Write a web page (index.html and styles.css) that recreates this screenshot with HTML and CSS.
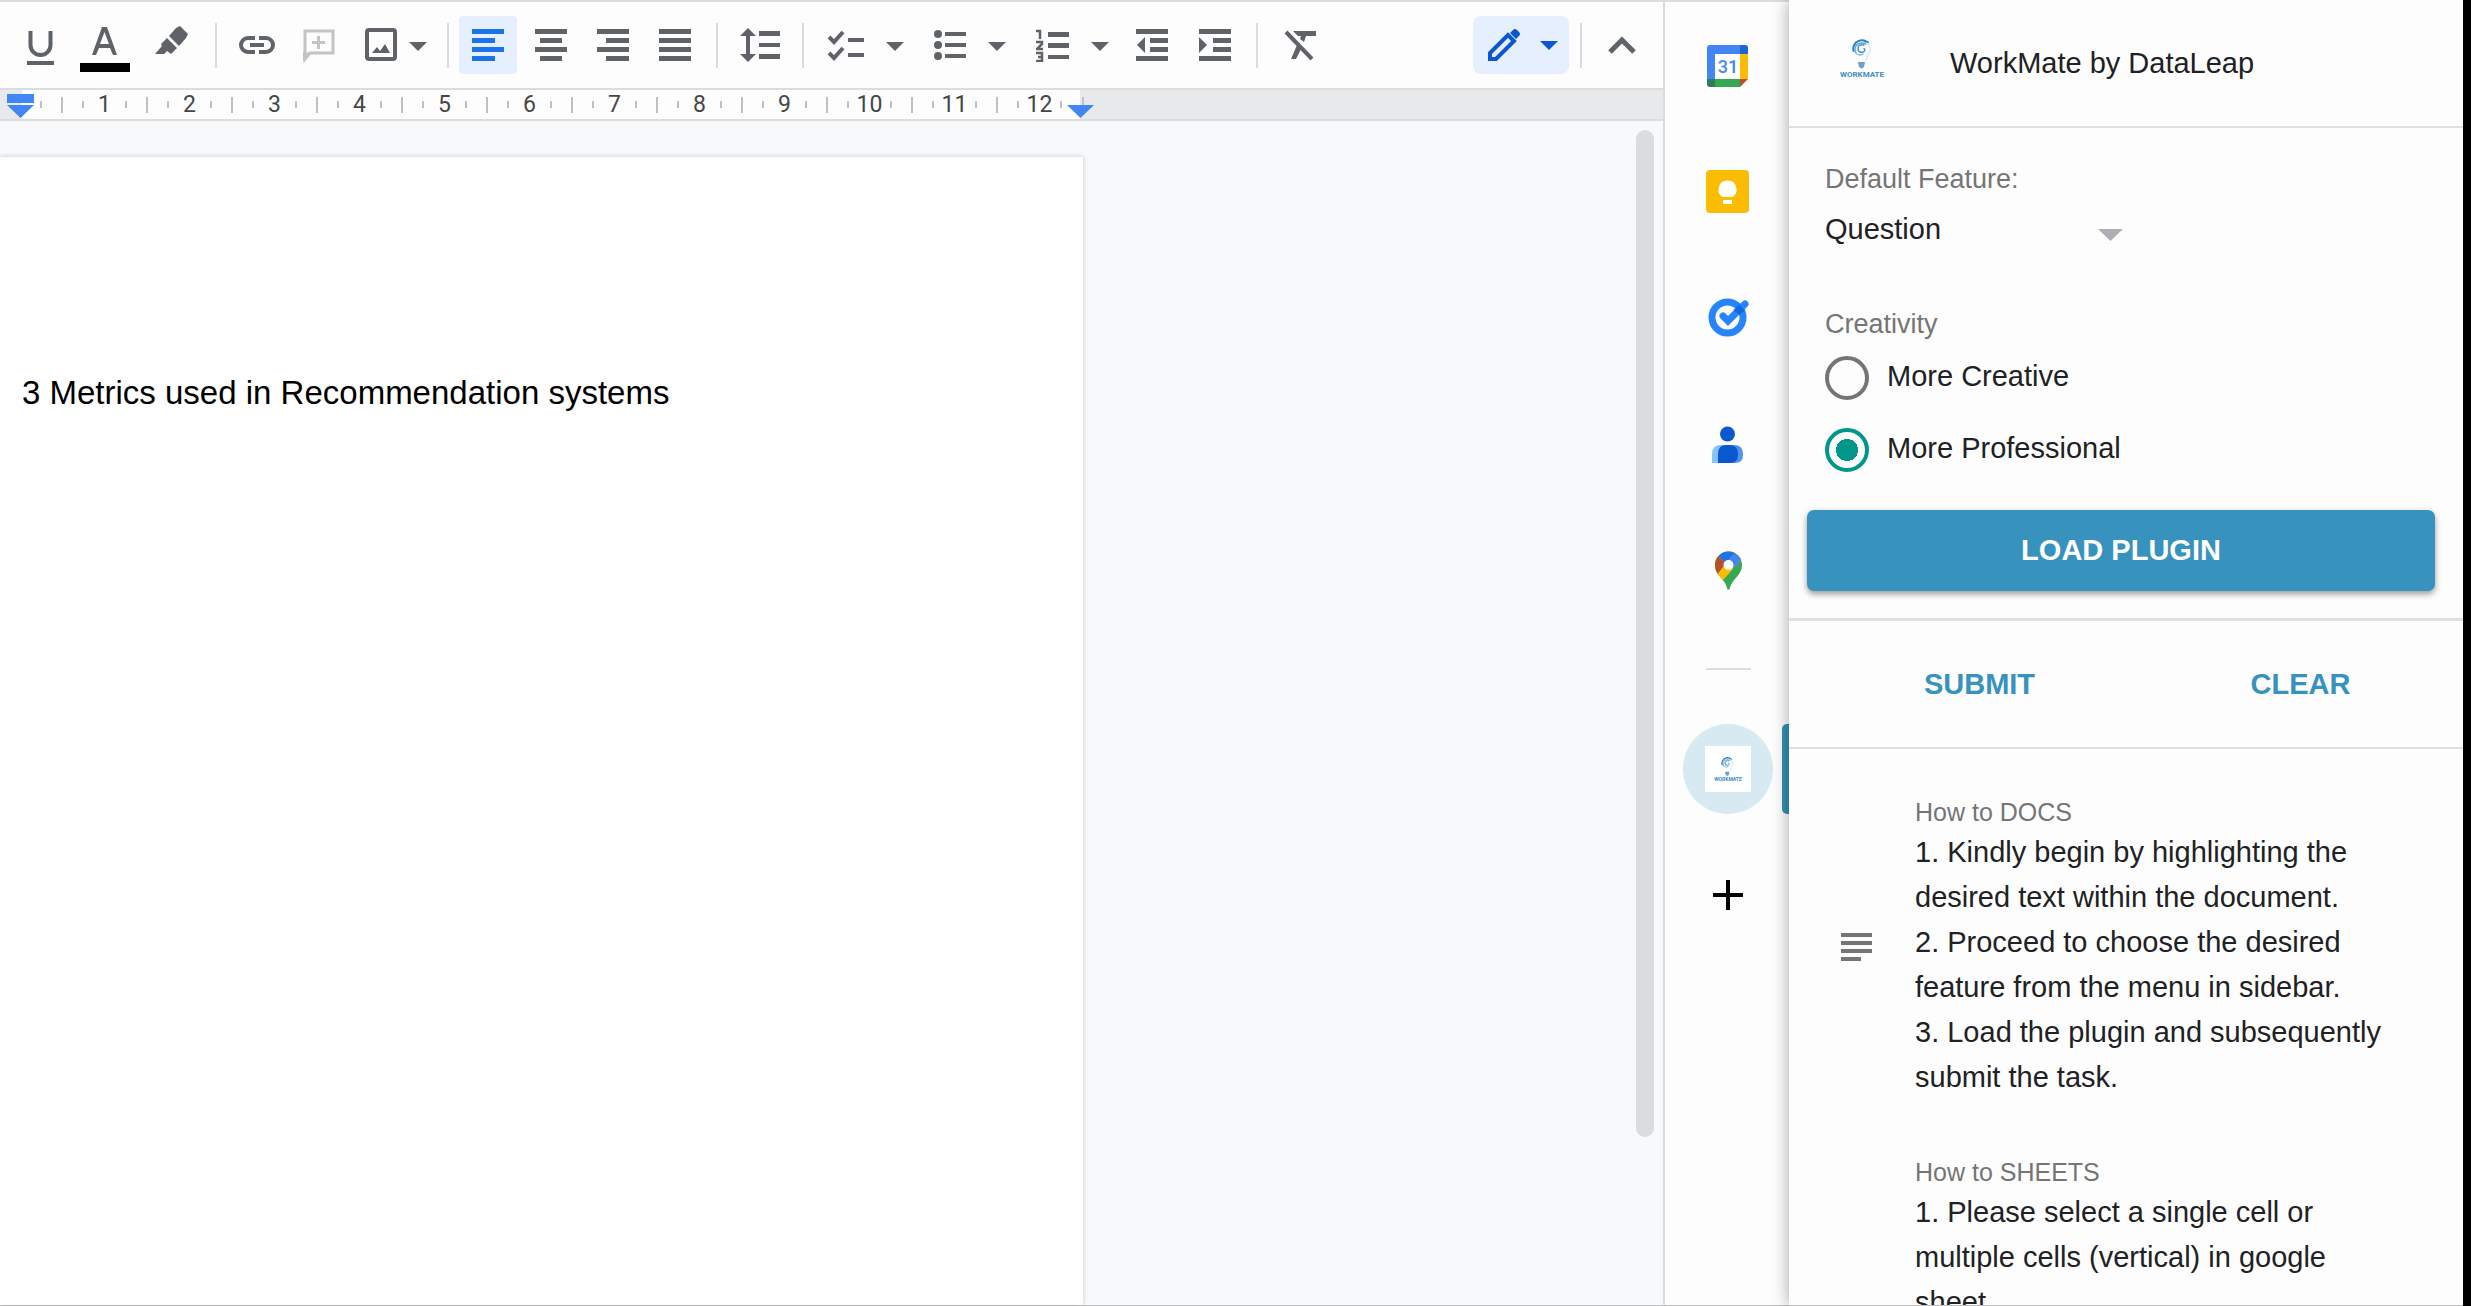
FILE: index.html
```html
<!DOCTYPE html>
<html lang="en">
<head>
<meta charset="utf-8">
<title>WorkMate by DataLeap</title>
<link rel="stylesheet" href="styles.css">
</head>
<body>
<div class="app">
  <main class="editor">
    <div class="toolbar" role="toolbar" aria-label="Formatting">
      <button class="tool" aria-label="Underline"><svg width="40" height="58" viewBox="0 0 40 58"><path d="M10.500 15v14a10 10 0 0 0 20 0V15" fill="none" stroke="#5f6368" stroke-width="4"/><path d="M7 45h27v4H7z"/></svg></button>
      <button class="tool wide" aria-label="Text color"><svg width="50" height="58" viewBox="0 0 50 58"><path d="M22 11h5l10 28h-4l-3-7H19l-3 7h-4zM20 28h9l-4.500-12z"/><path d="M0 47h50v9H0z" fill="#000"/></svg></button>
      <button class="tool" aria-label="Highlight color"><svg width="40" height="58" viewBox="0 0 40 58"><path d="M27 10l8 8-2 4-7 8-10-10 7-8zM14 22l10 10-6 6-4-3-3 3H2l7-8-1-2z"/></svg></button>
      <span class="divider"></span>
      <button class="tool" aria-label="Insert link"><svg width="40" height="58" viewBox="2 0 40 58"><path d="M18 22h-7a7 7 0 0 0 0 14h7M22 22h7a7 7 0 0 1 0 14h-7" fill="none" stroke="#5f6368" stroke-width="4"/><path d="M13 27h14v4H13z"/></svg></button>
      <button class="tool" aria-label="Add comment"><svg width="40" height="58" viewBox="3 0 40 58"><path d="M6 43V15h28v22H11z" fill="none" stroke="#c4c4c4" stroke-width="3"/><path d="M4 36v9l8-8zM18 20h3v5h5v3h-5v5h-3v-5h-5v-3h5z" fill="#c4c4c4"/></svg></button>
      <button class="tool with-caret" aria-label="Insert image"><svg width="32" height="58" viewBox="0 0 32 58"><rect x="2" y="14" width="28" height="29" rx="2" fill="none" stroke="#5f6368" stroke-width="4"/><path d="M7 37l5-6 3 4 5-7 5 9z"/></svg><svg class="caret" width="18" height="9" viewBox="0 0 18 9"><path d="M0 0h18L9 9z"/></svg></button>
      <span class="divider"></span>
      <button class="tool active" aria-label="Align left" aria-pressed="true"><svg width="32" height="32" viewBox="0 0 32 32"><path d="M0 0h32v5H0zM0 9h23v5H0zM0 18h32v5H0zM0 27h23v5H0z"/></svg></button>
      <button class="tool align" aria-label="Align center"><svg width="32" height="32" viewBox="0 0 32 32"><path d="M0 0h32v5H0zM5 9h22v5H5zM0 18h32v5H0zM5 27h22v5H5z"/></svg></button>
      <button class="tool align" aria-label="Align right"><svg width="32" height="32" viewBox="0 0 32 32"><path d="M0 0h32v5H0zM9 9h23v5H9zM0 18h32v5H0zM9 27h23v5H9z"/></svg></button>
      <button class="tool align" aria-label="Justify"><svg width="32" height="32" viewBox="0 0 32 32"><path d="M0 0h32v5H0zM0 9h32v5H0zM0 18h32v5H0zM0 27h32v5H0z"/></svg></button>
      <span class="divider"></span>
      <button class="tool" aria-label="Line spacing"><svg width="40" height="34" viewBox="0 0 40 34"><path d="M8 0l8 8h-6v18h6l-8 8-8-8h6V8H0zM19 3h21v5H19zM19 15h21v4H19zM19 26h21v5H19z"/></svg></button>
      <span class="divider"></span>
      <button class="tool with-caret list" aria-label="Checklist"><svg width="36" height="34" viewBox="0 0 36 34"><path d="M1 9l5 5 9-10M1 25l5 5 9-10" fill="none" stroke="#5f6368" stroke-width="4"/><path d="M20 10h16v4H20zM20 25h16v4H20z"/></svg><svg class="caret" width="18" height="9" viewBox="0 0 18 9"><path d="M0 0h18L9 9z"/></svg></button>
      <button class="tool with-caret list" aria-label="Bulleted list"><svg width="32" height="34" viewBox="0 0 32 34"><circle cx="4" cy="6" r="4"/><circle cx="4" cy="17" r="4"/><circle cx="4" cy="28" r="4"/><path d="M11 4h21v4H11zM11 15h21v4H11zM11 26h21v4H11z"/></svg><svg class="caret" width="18" height="9" viewBox="0 0 18 9"><path d="M0 0h18L9 9z"/></svg></button>
      <button class="tool with-caret list" aria-label="Numbered list"><svg width="33" height="34" viewBox="0 0 33 34"><path d="M0 3h4v8M0 14h6v2l-5 5h6M0 25h6v8H0M2 29h4" fill="none" stroke="#5f6368" stroke-width="2.500"/><path d="M12 4h21v5H12zM12 15h21v5H12zM12 27h21v4H12z"/></svg><svg class="caret" width="18" height="9" viewBox="0 0 18 9"><path d="M0 0h18L9 9z"/></svg></button>
      <button class="tool dent" aria-label="Decrease indent"><svg width="32" height="32" viewBox="0 0 32 32"><path d="M0 0h32v5H0zM14 9h18v5H14zM14 18h18v5H14zM0 27h32v5H0zM9 8v16l-8-8z"/></svg></button>
      <button class="tool dent" aria-label="Increase indent"><svg width="32" height="32" viewBox="0 0 32 32"><path d="M0 0h32v5H0zM14 9h18v5H14zM14 18h18v5H14zM0 27h32v5H0zM0 8v16l8-8z"/></svg></button>
      <span class="divider"></span>
      <button class="tool" aria-label="Clear formatting"><svg width="40" height="32" viewBox="-4 0 40 32"><path d="M9 2h23v5H22l-2 6-4-3 1-3h-3zM13 16l4 4-5 10H7z"/><path d="M2 3l26 27" stroke="#5f6368" stroke-width="4"/></svg></button>
      <span class="spacer"></span>
      <button class="mode" aria-label="Editing mode"><svg width="32" height="32" viewBox="0 0 32 32"><path d="M2 24L20 6l6 6L8 30H2z" fill="none" stroke="#0b57d0" stroke-width="4"/><path d="M22 4l3-3q2-2 4 0l2 2q2 2 0 4l-3 3z" fill="#0b57d0"/></svg><svg width="18" height="9" viewBox="0 0 18 9"><path d="M0 0h18L9 9z" fill="#0b57d0"/></svg></button>
      <span class="divider"></span>
      <button class="tool collapse" aria-label="Hide menus"><svg width="28" height="18" viewBox="0 0 28 18"><path d="M2 16L14 4l12 12" fill="none" stroke="#5f6368" stroke-width="5"/></svg></button>
    </div>
    <div class="ruler">
      <div class="scale">
        <span class="unit"><i></i><i></i><i></i><b>1</b></span><span class="unit"><i></i><i></i><i></i><b>2</b></span><span class="unit"><i></i><i></i><i></i><b>3</b></span><span class="unit"><i></i><i></i><i></i><b>4</b></span><span class="unit"><i></i><i></i><i></i><b>5</b></span><span class="unit"><i></i><i></i><i></i><b>6</b></span><span class="unit"><i></i><i></i><i></i><b>7</b></span><span class="unit"><i></i><i></i><i></i><b>8</b></span><span class="unit"><i></i><i></i><i></i><b>9</b></span><span class="unit"><i></i><i></i><i></i><b>10</b></span><span class="unit"><i></i><i></i><i></i><b>11</b></span><span class="unit"><i></i><i></i><i></i><b>12</b></span><span class="unit last"><i></i><i></i></span>
      </div>
      <svg class="marker left" width="27" height="24" viewBox="0 0 27 24"><path d="M0 0h27v9H0zM0 11h27L13.500 24z"/></svg>
      <svg class="marker right" width="27" height="24" viewBox="0 0 27 24"><path d="M0 11h27L13.500 24z"/></svg>
    </div>
    <div class="canvas">
      <article class="page"><p>3 Metrics used in Recommendation systems</p></article>
      <div class="scrollbar"></div>
    </div>
  </main>

  <nav class="rail" aria-label="Side panel">
    <a href="#calendar" aria-label="Calendar"><svg width="44" height="44" viewBox="0 0 44 44"><path d="M4 1h30v9H9v25H1V4q0-3 3-3z" fill="#4285f4"/><path d="M34 1h5q3 0 3 3v6h-8z" fill="#1967d2"/><path d="M34 10h8v25h-8z" fill="#fbbc04"/><path d="M9 35h25v8H9z" fill="#34a853"/><path d="M1 35h8v8H4q-3 0-3-3z" fill="#2b7d5b"/><path d="M34 35h8l-8 8z" fill="#b5502f"/><path d="M9 10h25v25H9z" fill="#fff"/><text x="22" y="29" text-anchor="middle" class="cal-day">31</text></svg></a>
    <a href="#keep" aria-label="Keep"><svg width="44" height="44" viewBox="0 0 44 44"><rect x="0" y="0" width="43" height="43" rx="4" fill="#fbbc04"/><path d="M21.500 10.500a9 9 0 0 1 5 16.500h-10a9 9 0 0 1 5-16.500zM17 30h9v4h-9z" fill="#fff"/></svg></a>
    <a href="#tasks" aria-label="Tasks"><svg width="44" height="44" viewBox="0 0 44 44"><circle cx="21.500" cy="21.500" r="15.500" fill="none" stroke="#2684fc" stroke-width="7"/><path d="M17 20l5 5L39 8" fill="none" stroke="#2684fc" stroke-width="7" stroke-linecap="round" stroke-linejoin="miter"/><path d="M33 8.500l6 6-5.500 4.500-6-5z" fill="#1668d8"/></svg></a>
    <a href="#contacts" aria-label="Contacts"><svg width="44" height="44" viewBox="0 0 44 44"><path d="M6 41v-9q0-9 9-9h6v18z" fill="#86c3fd"/><path d="M22 23h6q9 0 9 9v1q0 8-8 8h-7z" fill="#5393f5"/><circle cx="21.500" cy="12" r="7.500" fill="#0b57d0"/><path d="M12 41v-9q0-9 8-9h3q9 0 9 9v1q0 8-8 8z" fill="#0b57d0"/></svg></a>
    <a href="#maps" aria-label="Maps"><svg width="44" height="44" viewBox="0 0 44 44"><clipPath id="pin"><path d="M22.500 3.500A13.500 13.500 0 0 1 36 17c0 11-10 13-12.500 24.500h-2C19 30 9 28 9 17A13.500 13.500 0 0 1 22.500 3.500z"/></clipPath><g clip-path="url(#pin)"><path d="M0 0h44v44H0z" fill="#34a853"/><path d="M36 11L9 41 0 44V0h40z" fill="#fbbc04"/><path d="M27 21l9-10 8-11H32L20 16z" fill="#4285f4"/><path d="M20 15L10 6 0 0v30l10-2z" fill="#b5502f"/><path d="M20 15L33 0H0l10 6z" fill="#1a73e8"/></g><circle cx="22.500" cy="17" r="5" fill="#fff"/></svg></a>
    <hr>
    <a class="current" href="#workmate" aria-label="WorkMate"><svg width="46" height="46" viewBox="0 0 46 46"><path d="M0 0h46v46H0z" fill="#fff"/><g transform="translate(8.500 11) scale(.64)"><use href="#bulb"/></g><text x="23" y="35" text-anchor="middle" class="logo-small">WORKMATE</text></svg></a>
    <a href="#addons" aria-label="Get add-ons"><svg width="44" height="44" viewBox="0 0 44 44"><path d="M20 6h4v13h13v4H24v13h-4V23H7v-4h13z" fill="#000"/></svg></a>
  </nav>

  <aside class="panel">
    <header class="panel-head">
      <svg width="64" height="48" viewBox="-10 0 64 48"><g id="bulb" fill="none" stroke-linecap="round"><path d="M13.500 12C12 5 18 0 24 1.500l4 2" stroke="#2f7fc0" stroke-width="2"/><path d="M16 14q-3-6 2-9 4-2 8 0" stroke="#5aa9dc" stroke-width="1.500"/><path d="M24 6q-6-1-6 3.500t5 3.500q3-1 1-3.500" stroke="#3d93cd" stroke-width="1.500"/><path d="M17 15q3 2 6 0" stroke="#6fb6e2" stroke-width="1.500"/><path d="M27 4q6 5 1 12l-2 5" stroke="#d5e8f4" stroke-width="1.500"/><path d="M18 23h7l-1 5-2.500 1.500L19 28z" fill="#6c9fce"/></g><text x="22" y="38" text-anchor="middle" class="logo-text">WORKMATE</text></svg>
      <h1>WorkMate by DataLeap</h1>
    </header>
    <form class="settings">
      <label class="caption" for="feature">Default Feature:</label>
      <div class="select">
        <select id="feature"><option>Question</option></select>
        <svg width="25" height="12" viewBox="0 0 25 12"><path d="M0 0h25L12.500 12z" fill="#aeafb4"/></svg>
      </div>
      <fieldset>
        <legend class="caption">Creativity</legend>
        <label class="choice"><input type="radio" name="creativity"><span>More Creative</span></label>
        <label class="choice"><input type="radio" name="creativity" checked><span>More Professional</span></label>
      </fieldset>
      <button type="button" class="load">LOAD PLUGIN</button>
    </form>
    <div class="actions"><button>SUBMIT</button><button>CLEAR</button></div>
    <div class="help">
      <section class="guide">
        <svg width="31" height="28" viewBox="0 0 31 28"><path d="M0 0h31v4H0zM0 8h31v4H0zM0 16h31v4H0zM0 24h20v4H0z" fill="#757575"/></svg>
        <div><h2>How to DOCS</h2>
        <p>1. Kindly begin by highlighting the<br>desired text within the document.<br>2. Proceed to choose the desired<br>feature from the menu in sidebar.<br>3. Load the plugin and subsequently<br>submit the task.</p></div>
      </section>
      <section class="guide">
        <span></span>
        <div><h2>How to SHEETS</h2>
        <p>1. Please select a single cell or<br>multiple cells (vertical) in google<br>sheet.</p></div>
      </section>
    </div>
  </aside>
</div>
</body>
</html>
```
FILE: styles.css
```css
* { box-sizing: border-box; }

body {
  margin: 0;
  background: #000;
  color: #202124;
  font-family: "Liberation Sans", Arial, sans-serif;
}

button {
  margin: 0;
  padding: 0;
  border: 0;
  background: none;
  font: inherit;
  cursor: pointer;
}

svg { display: block; flex: none; }

.app {
  display: flex;
  height: 100vh;
  padding-right: 8px;
  overflow: hidden;
}

/* Document editor */
.editor {
  flex: 1;
  min-width: 0;
  display: flex;
  flex-direction: column;
  background: #f8f9fb;
  border-bottom: 1px solid #c0c0c0;
}

.toolbar {
  display: flex;
  align-items: center;
  height: 90px;
  padding: 0 27px 0 20px;
  background: #fdfdfe;
  border-top: 2px solid #dadce0;
  border-bottom: 2px solid #dadce0;
}

.tool {
  display: flex;
  align-items: center;
  justify-content: center;
  height: 58px;
  fill: #5f6368;
}

.tool + .tool { margin-left: 23px; }
.tool + .tool.wide { margin-left: 20px; }
.tool.with-caret { gap: 12px; }
.tool.list { gap: 22px; }
.tool.list + .tool.list { margin-left: 30px; }
.tool.align, .tool.dent { width: 32px; }
.tool.align + .tool.align { margin-left: 30px; }
.tool.list + .tool.dent { margin-left: 27px; }
.tool.dent + .tool.dent { margin-left: 31px; }
.tool .caret { margin-top: 3px; }

.tool.active {
  width: 58px;
  margin-left: -12px;
  border-radius: 4px;
  background: #e5effe;
  fill: #1a73e8;
}

.tool.active + .tool { margin-left: 18px; }

.divider {
  flex: none;
  width: 2px;
  height: 45px;
  margin: 0 22px;
  background: #dadce0;
}

.tool.with-caret + .divider { margin-left: 20px; }
.tool.align + .divider { margin-left: 25px; }
.tool.dent + .divider { margin-left: 25px; }
.divider + .tool.list { margin-left: 2px; }

.spacer { flex: 1; }

.mode {
  display: flex;
  align-items: center;
  gap: 20px;
  height: 58px;
  padding: 0 11px 0 15px;
  border-radius: 8px;
  background: #e5effe;
}

.mode + .divider { margin: 0 26px 0 11px; }

/* Ruler */
.ruler {
  position: relative;
  height: 31px;
  padding-left: 22px;
  background: #e8e9eb;
  border-bottom: 2px solid #dadce0;
}

.scale {
  display: flex;
  align-items: center;
  width: 1058px;
  height: 29px;
  padding-left: 8px;
  background: #fdfdfe;
}

.unit {
  flex: none;
  display: grid;
  grid-template-columns: repeat(4, 1fr);
  align-items: center;
  justify-items: center;
  width: 85px;
  height: 29px;
}

.unit.last { grid-template-columns: 22px 22px; }

.unit i { width: 2px; height: 7px; background: #bdc1c6; }
.unit i:nth-child(2) { height: 16px; }

.unit b {
  display: flex;
  justify-content: center;
  width: 0;
  color: #444746;
  font: 400 23px/29px Roboto, sans-serif;
}

.marker { position: absolute; top: 4px; fill: #4285f4; }
.marker.left { left: 7px; }
.marker.right { left: 1067px; }

.canvas {
  flex: 1;
  display: flex;
  justify-content: space-between;
  padding: 9px 9px 0 0;
}

.page {
  width: 1083px;
  margin-top: 27px;
  padding: 217px 0 0 22px;
  background: #fefefe;
  box-shadow: 0 0 5px rgba(60, 64, 67, .25);
}

.page p {
  margin: 0;
  color: #000;
  font-size: 33px;
  line-height: 38px;
}

.scrollbar {
  width: 18px;
  height: 1007px;
  border-radius: 9px;
  background: #dadce0;
}

/* Side rail */
.rail {
  display: flex;
  flex-direction: column;
  align-items: center;
  width: 126px;
  padding: 42px 0 0 2px;
  background: #fdfdfd;
  border-top: 2px solid #dadce0;
  border-left: 2px solid #dadce0;
  border-bottom: 1px solid #c0c0c0;
}

.rail a { display: block; margin-bottom: 82px; }

.rail hr {
  width: 45px;
  height: 2px;
  margin: -6px 0 54px;
  border: 0;
  background: #dadce0;
}

.rail .current {
  position: relative;
  display: flex;
  align-items: center;
  justify-content: center;
  width: 90px;
  height: 90px;
  margin-bottom: 60px;
  border-radius: 50%;
  background: #d7e9f1;
}

.rail .current::after {
  content: "";
  position: absolute;
  top: 0;
  right: -17px;
  width: 8px;
  height: 90px;
  border-radius: 5px 0 0 5px;
  background: #3590b4;
}

.cal-day { fill: #4285f4; font: 500 18px Roboto, sans-serif; }
.logo-text { fill: #3d8cc4; font: 700 8px Roboto, sans-serif; }
.logo-small { fill: #3d8cc4; font: 700 5px Roboto, sans-serif; }

/* Add-on panel */
.panel {
  position: relative;
  display: flex;
  flex-direction: column;
  width: 674px;
  background: #fdfdfd;
  border-bottom: 1px solid #c0c0c0;
  box-shadow: 0 0 16px rgba(0, 0, 0, .35);
  clip-path: inset(0 0 0 -20px);
}

.panel-head {
  flex: none;
  display: flex;
  align-items: center;
  gap: 56px;
  height: 128px;
  padding-left: 41px;
  border-bottom: 2px solid #e0e0e0;
}

.panel h1 { margin: 0; font-size: 29px; font-weight: 400; line-height: 36px; }

.settings {
  flex: none;
  padding: 33px 18px 27px;
  border-bottom: 3px solid #e0e0e0;
}

.caption {
  display: block;
  padding: 0 0 0 18px;
  color: #757575;
  font-size: 27px;
  line-height: 36px;
}

.select {
  display: flex;
  align-items: center;
  width: 316px;
  height: 64px;
  padding-left: 18px;
}

.select select {
  flex: 1;
  min-width: 0;
  height: 64px;
  margin: 0 -25px 0 0;
  padding: 0;
  border: 0;
  background: none;
  color: #202124;
  font: inherit;
  font-size: 29px;
  appearance: none;
}

.select svg { margin-top: 12px; pointer-events: none; }

fieldset { margin: 45px 0 0; padding: 0; border: 0; }
legend { margin-bottom: 14px; }

.choice {
  display: flex;
  align-items: center;
  gap: 18px;
  height: 44px;
  padding-left: 18px;
  margin-bottom: 28px;
  font-size: 29px;
}

.choice span { padding-bottom: 4px; }

.choice input {
  width: 44px;
  height: 44px;
  margin: 0;
  border: 4px solid #757575;
  border-radius: 50%;
  appearance: none;
}

.choice input:checked {
  border-color: #009688;
  background: radial-gradient(circle, #009688 0 11px, transparent 11px);
}

.load {
  display: block;
  width: calc(100% - 10px);
  height: 81px;
  margin-top: 10px;
  border-radius: 7px;
  background: #3792bd;
  box-shadow: 0 3px 6px rgba(0, 0, 0, .4);
  color: #fff;
  font-size: 29px;
  font-weight: 700;
}

.actions {
  flex: none;
  display: grid;
  grid-template-columns: 1fr 1fr;
  height: 128px;
  padding: 0 2px 0 30px;
  border-bottom: 2px solid #e0e0e0;
}

.actions button { color: #3792bd; font-size: 29px; font-weight: 700; }

.help {
  flex: 1;
  min-height: 0;
  padding: 45px 48px 0 52px;
  overflow: hidden;
}

.guide {
  display: grid;
  grid-template-columns: 31px 1fr;
  gap: 43px;
  align-items: center;
  margin-bottom: 54px;
}

.guide h2 {
  margin: 0;
  color: #757575;
  font-size: 25px;
  font-weight: 400;
  line-height: 36px;
}

.guide p { margin: 0; font-size: 29px; line-height: 45px; white-space: nowrap; }
```
